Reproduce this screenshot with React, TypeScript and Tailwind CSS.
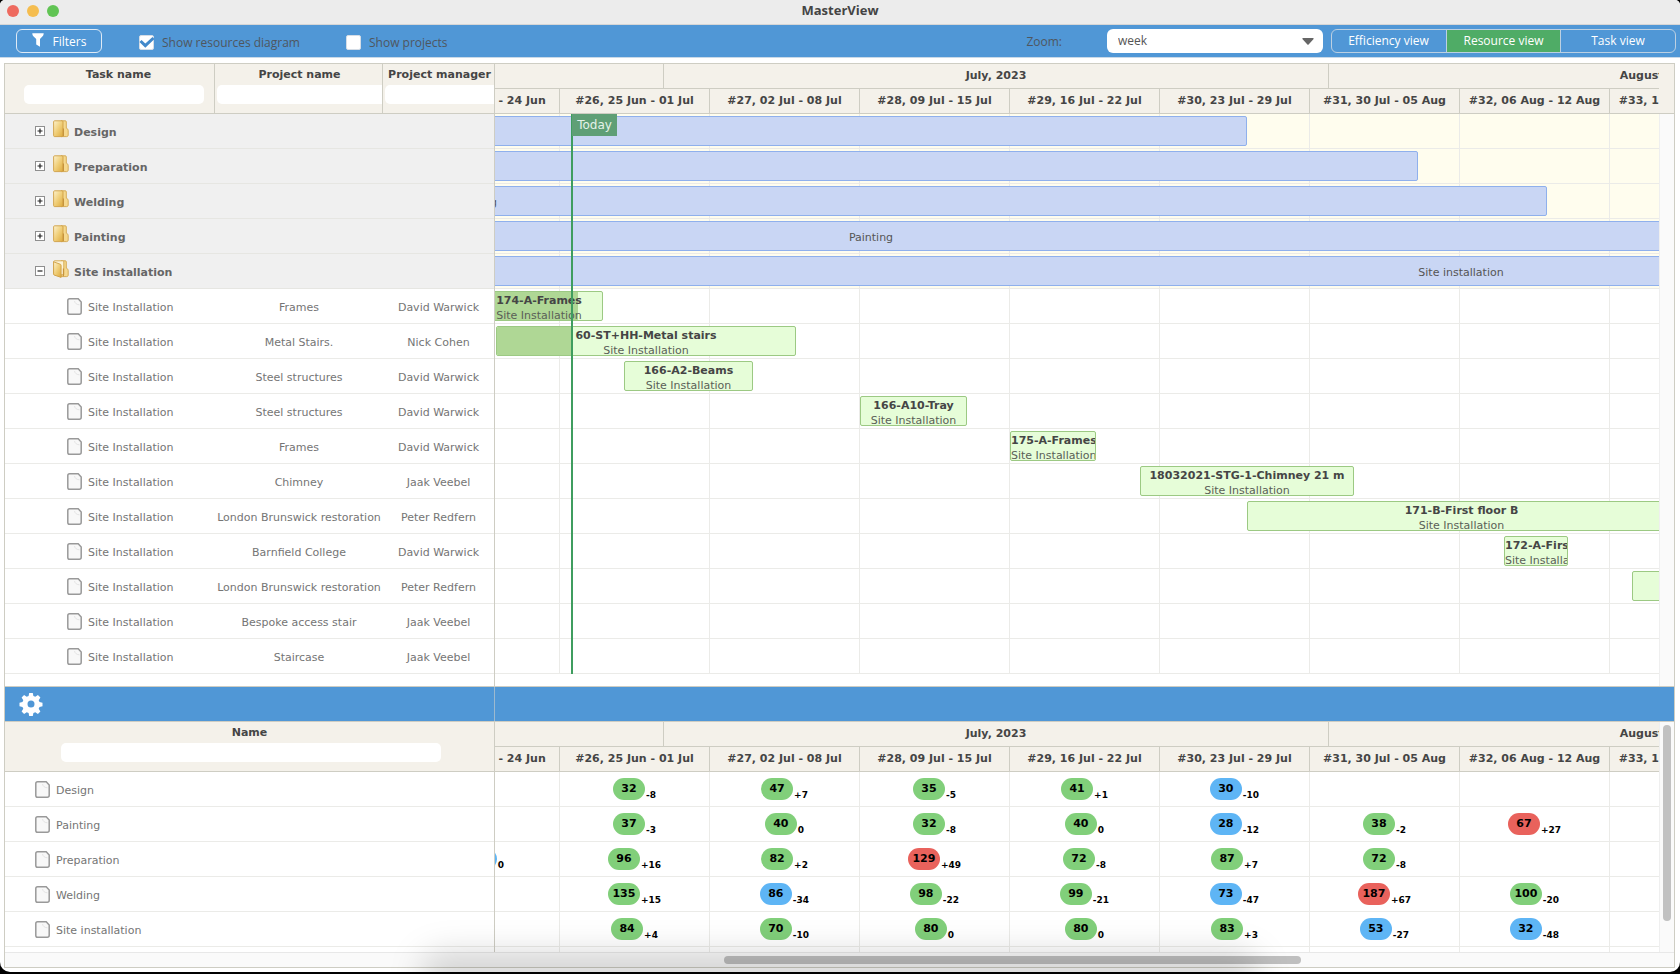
import React from "react";

type Tone = "green" | "blue" | "red";

const tones: Record<Tone, string> = {
  green: "bg-[#81cf7a]",
  blue: "bg-[#5eb5f5]",
  red: "bg-[#e9625c]",
};

const weeks = [
  "#25, 18 Jun - 24 Jun",
  "#26, 25 Jun - 01 Jul",
  "#27, 02 Jul - 08 Jul",
  "#28, 09 Jul - 15 Jul",
  "#29, 16 Jul - 22 Jul",
  "#30, 23 Jul - 29 Jul",
  "#31, 30 Jul - 05 Aug",
  "#32, 06 Aug - 12 Aug",
  "#33, 13 Aug - 19 Aug",
];

type Group = { name: string; open?: boolean; left: number; width: number; label?: string };

const groups: Group[] = [
  { name: "Design", left: -1450, width: 2202 },
  { name: "Preparation", left: -1400, width: 2323 },
  { name: "Welding", left: -1092, width: 2144, label: "Welding" },
  { name: "Painting", left: -425, width: 1602, label: "Painting" },
  { name: "Site installation", open: true, left: -20, width: 1972, label: "Site installation" },
];

type Task = {
  project: string;
  manager: string;
  bar?: { left: number; width: number; title: string; done?: number };
};

const tasks: Task[] = [
  { project: "Frames", manager: "David Warwick", bar: { left: -20, width: 128, title: "174-A-Frames", done: 102 } },
  { project: "Metal Stairs.", manager: "Nick Cohen", bar: { left: 1, width: 300, title: "60-ST+HH-Metal stairs", done: 75 } },
  { project: "Steel structures", manager: "David Warwick", bar: { left: 129, width: 129, title: "166-A2-Beams" } },
  { project: "Steel structures", manager: "David Warwick", bar: { left: 365, width: 107, title: "166-A10-Tray" } },
  { project: "Frames", manager: "David Warwick", bar: { left: 515, width: 86, title: "175-A-Frames" } },
  { project: "Chimney", manager: "Jaak Veebel", bar: { left: 645, width: 214, title: "18032021-STG-1-Chimney 21 m" } },
  { project: "London Brunswick restoration", manager: "Peter Redfern", bar: { left: 752, width: 429, title: "171-B-First floor B" } },
  { project: "Barnfield College", manager: "David Warwick", bar: { left: 1009, width: 64, title: "172-A-First floor" } },
  { project: "London Brunswick restoration", manager: "Peter Redfern", bar: { left: 1137, width: 200, title: "" } },
  { project: "Bespoke access stair", manager: "Jaak Veebel" },
  { project: "Staircase", manager: "Jaak Veebel" },
];

type Load = [number, string, Tone] | null;

const resources: { name: string; loads: Load[] }[] = [
  {
    name: "Design",
    loads: [null, [32, "-8", "green"], [47, "+7", "green"], [35, "-5", "green"], [41, "+1", "green"], [30, "-10", "blue"], null, null, null],
  },
  {
    name: "Painting",
    loads: [null, [37, "-3", "green"], [40, "0", "green"], [32, "-8", "green"], [40, "0", "green"], [28, "-12", "blue"], [38, "-2", "green"], [67, "+27", "red"], null],
  },
  {
    name: "Preparation",
    loads: [[80, "0", "blue"], [96, "+16", "green"], [82, "+2", "green"], [129, "+49", "red"], [72, "-8", "green"], [87, "+7", "green"], [72, "-8", "green"], null, null],
  },
  {
    name: "Welding",
    loads: [null, [135, "+15", "green"], [86, "-34", "blue"], [98, "-22", "green"], [99, "-21", "green"], [73, "-47", "blue"], [187, "+67", "red"], [100, "-20", "green"], null],
  },
  {
    name: "Site installation",
    loads: [null, [84, "+4", "green"], [70, "-10", "green"], [80, "0", "green"], [80, "0", "green"], [83, "+3", "green"], [53, "-27", "blue"], [32, "-48", "blue"], null],
  },
];

function FunnelIcon() {
  return (
    <svg width="12" height="14" viewBox="0 0 12 14" fill="#fff" aria-hidden="true">
      <path d="M.3.300h11.400c0 1.400-.5 2.500-1.600 3.500L8 5.900v7.800l-3.800-2.200V5.900L1.900 3.800C.8 2.800.3 1.700.3.300z" />
    </svg>
  );
}

function GearIcon() {
  return (
    <svg width="24" height="24" viewBox="0 0 24 24" fill="#fff" fillRule="evenodd" aria-hidden="true">
      <path d="M10.200 1h3.600l.6 3 1.900.8 2.600-1.700 2.500 2.500-1.700 2.600.8 1.900 3 .6v3.600l-3 .6-.8 1.900 1.700 2.600-2.500 2.500-2.600-1.700-1.900.8-.6 3h-3.600l-.6-3-1.900-.8-2.600 1.700-2.500-2.500 1.700-2.600-.8-1.900-3-.6v-3.600l3-.6.8-1.900-1.700-2.600 2.500-2.500 2.600 1.700 1.900-.8zM12 8.600a3.500 3.500 0 1 0 0 7 3.500 3.500 0 0 0 0-7z" />
    </svg>
  );
}

function ToggleIcon({ open }: { open?: boolean }) {
  return (
    <svg width="10" height="10" viewBox="0 0 10 10" aria-hidden="true">
      <rect x="0.500" y="0.500" width="9" height="9" fill="#fff" stroke="#8f8f8f" />
      <path d={open ? "M2.500 5h5" : "M2.500 5h5M5 2.500v5"} stroke="#222" strokeWidth="1.200" />
    </svg>
  );
}

function FolderIcon({ open }: { open?: boolean }) {
  return (
    <svg width="16" height="18" viewBox="0 0 16 18" aria-hidden="true">
      <defs>
        <linearGradient id="folderFill" x1="0" y1="0" x2="1" y2="1">
          <stop offset="0" stopColor="#fdf3cf" />
          <stop offset="0.500" stopColor="#f0cf7a" />
          <stop offset="1" stopColor="#dda93c" />
        </linearGradient>
      </defs>
      <path
        d="M8 .8h4.300c.6 0 1 .4 1 1v6.400c1.300.4 1.900 1.200 1.900 2.500v4.300c0 1-.6 1.600-1.500 1.600H8z"
        fill="#f5d88e"
        stroke="#d3a54c"
        strokeWidth="0.900"
      />
      {open ? (
        <>
          <path d="M1.600.8h8.200c.6 0 1 .4 1 1v13H1.600c-.6 0-1-.4-1-1v-12c0-.6.4-1 1-1z" fill="#fdf4d8" stroke="#d3a54c" strokeWidth="0.900" />
          <path
            d="M.6 1.800l6.600 2.400c.6.200.9.600.9 1.200v12L1.600 15.200c-.7-.3-1-.7-1-1.300z"
            fill="url(#folderFill)"
            stroke="#cf9f45"
            strokeWidth="0.900"
          />
        </>
      ) : (
        <path
          d="M1.600.8h7.400c.6 0 1 .4 1 1v13.800c0 .6-.4 1-1 1H1.600c-.6 0-1-.4-1-1V1.800c0-.6.4-1 1-1z"
          fill="url(#folderFill)"
          stroke="#cf9f45"
          strokeWidth="0.900"
        />
      )}
      <path d="M10.400 8.500v7.800" stroke="#c4913a" strokeWidth="1.100" />
    </svg>
  );
}

function DocIcon() {
  return (
    <svg width="15" height="17" viewBox="0 0 15 17" aria-hidden="true">
      <path
        d="M2.600.8h8.600L14.200 4v10.200c0 1.200-.7 2-1.900 2H2.600c-1.200 0-1.800-.7-1.800-1.800V2.600C.8 1.400 1.500.8 2.600.8z"
        fill="#f8f8f8"
        stroke="#999"
        strokeWidth="1.500"
      />
      <path d="M7.500 3c.4 2.200 2.200 3.800 5 3.800" fill="none" stroke="#e4e4e4" />
    </svg>
  );
}

function TitleBar() {
  return (
    <header className="flex h-[25px] items-center border-b border-[#d6d6d6] bg-[#ececec] px-[7px]">
      <div className="flex flex-1 gap-2 pb-[2px]">
        <span className="size-3 rounded-full bg-[#ee6a5f]" />
        <span className="size-3 rounded-full bg-[#f5bd4f]" />
        <span className="size-3 rounded-full bg-[#61c454]" />
      </div>
      <h1 className="pb-1 text-[13px] font-bold leading-4 text-[#444]">MasterView</h1>
      <div className="flex-1" />
    </header>
  );
}

function Check({ label, checked, id }: { label: string; checked?: boolean; id: string }) {
  return (
    <label htmlFor={id} className="flex items-center gap-2 pt-[2px] text-[#4f565e]">
      <span className="relative size-[15px]">
        <input
          id={id}
          type="checkbox"
          defaultChecked={checked}
          className="peer block size-[15px] appearance-none rounded-[2px] border border-[#d5dde6] bg-white"
        />
        <svg
          viewBox="0 0 15 15"
          className="pointer-events-none absolute inset-0 hidden size-[15px] peer-checked:block"
          aria-hidden="true"
        >
          <path d="M1.500 6l4.800 4.600L14.500 3" fill="none" stroke="#4289cb" strokeWidth="3" />
        </svg>
      </span>
      <span className="pt-[2px]">{label}</span>
    </label>
  );
}

function Toolbar() {
  return (
    <div className="flex h-[33px] items-center border-b border-[#c9d9e8] bg-[#5097d6] pl-4 pr-1 text-[12px] leading-4">
      <button className="flex h-6 w-[86px] items-center justify-center gap-[9px] rounded-md border border-[#dfeaf5] text-white">
        <span className="pb-[2px]">
          <FunnelIcon />
        </span>
        <span className="pt-px">Filters</span>
      </button>
      <div className="ml-[37px]">
        <Check id="show-resources" label="Show resources diagram" checked />
      </div>
      <div className="ml-[46px]">
        <Check id="show-projects" label="Show projects" />
      </div>
      <label htmlFor="zoom" className="ml-auto pt-px text-[#4f565e]">
        Zoom:
      </label>
      <div className="relative ml-[45px] w-[216px]">
        <select
          id="zoom"
          defaultValue="week"
          className="block h-6 w-full appearance-none rounded-md bg-white pl-[11px] text-[#555]"
        >
          <option>day</option>
          <option>week</option>
          <option>month</option>
        </select>
        <svg className="pointer-events-none absolute right-[9px] top-[9px]" width="12" height="7" viewBox="0 0 12 7" aria-hidden="true">
          <path d="M1.200 0h9.600c.8 0 1.100.7.600 1.200L6.600 6.500c-.3.400-.9.400-1.200 0L.6 1.200C.1.700.4 0 1.200 0z" fill="#666" />
        </svg>
      </div>
      <div className="ml-2 flex h-6 overflow-hidden rounded-md border border-[#bcd0e2] text-white">
        <button className="w-[114px] pr-px">Efficiency view</button>
        <button className="w-[115px] border-x border-[#bcd0e2] bg-[#4fac66]">Resource view</button>
        <button className="w-[114px]">Task view</button>
      </div>
    </div>
  );
}

const dark = "border-[#cecdc3]";

function ScaleHeader() {
  return (
    <div className={`overflow-hidden border-b bg-[#f4f1ea] font-bold text-[#454545] ${dark}`}>
      <div className={`flex h-[25px] border-b leading-6 ${dark}`}>
        <div className={`w-[169px] shrink-0 border-r ${dark}`} />
        <div className={`w-[665px] shrink-0 border-r text-center ${dark}`}>July, 2023</div>
        <div className="w-[664px] shrink-0 text-center">August, 2023</div>
      </div>
      <div className="-ml-[85px] flex h-6 leading-6">
        {weeks.map((w) => (
          <div key={w} className={`w-[150px] shrink-0 border-r text-center ${dark}`}>
            {w}
          </div>
        ))}
      </div>
    </div>
  );
}

function WeekCells({ tint }: { tint?: boolean }) {
  return (
    <div className={tint ? "-ml-[85px] flex h-full bg-[#fffdee]" : "-ml-[85px] flex h-full"}>
      {weeks.map((w) => (
        <div key={w} className="w-[150px] shrink-0 border-r border-[#ebebe8]" />
      ))}
    </div>
  );
}

function TaskGrid() {
  return (
    <div className={`w-[490px] shrink-0 border-r ${dark}`}>
      <table className="w-full table-fixed border-separate border-spacing-0">
        <colgroup>
          <col className="w-[210px]" />
          <col className="w-[168px]" />
          <col />
        </colgroup>
        <thead>
          <tr className="h-[50px] bg-[#f4f1ea] align-top text-[#454545]">
            <th className={`border-b border-r p-0 pl-[18px] ${dark}`}>
              <label htmlFor="f-task" className="block pt-px leading-5">Task name</label>
              <input id="f-task" className="ml-px block h-[19px] w-[180px] rounded-[5px] bg-white px-1" />
            </th>
            <th className={`border-b border-r p-0 pl-[2px] ${dark}`}>
              <label htmlFor="f-project" className="block pt-px leading-5">Project name</label>
              <input id="f-project" className="block h-[19px] w-full rounded-l-[5px] bg-white px-1" />
            </th>
            <th className={`border-b p-0 pl-[2px] ${dark}`}>
              <label htmlFor="f-manager" className="block pt-px leading-5">Project manager</label>
              <input id="f-manager" className="block h-[19px] w-full rounded-l-[5px] bg-white px-1" />
            </th>
          </tr>
        </thead>
        <tbody className="text-[#757575]">
          {groups.map((g) => (
            <tr key={g.name} className="h-[35px] bg-[#f0f0f0] font-bold text-[#666]">
              <td colSpan={3} className="border-b border-[#e6e6e2] p-0">
                <div className="flex items-center pl-[30px]">
                  <button aria-label={`Toggle ${g.name}`}>
                    <ToggleIcon open={g.open} />
                  </button>
                  <span className="-mt-1 ml-2">
                    <FolderIcon open={g.open} />
                  </span>
                  <span className="ml-[5px] pt-[3px]">{g.name}</span>
                </div>
              </td>
            </tr>
          ))}
          {tasks.map((t, i) => (
            <tr key={i} className="h-[35px] text-center">
              <td className="border-b border-[#ebebe8] p-0">
                <div className="flex items-center gap-[6px] pl-[62px]">
                  <DocIcon />
                  <span className="pt-[3px]">Site Installation</span>
                </div>
              </td>
              <td className="whitespace-nowrap border-b border-[#ebebe8] p-0 pt-[3px]">{t.project}</td>
              <td className="whitespace-nowrap border-b border-[#ebebe8] p-0 pt-[3px]">{t.manager}</td>
            </tr>
          ))}
        </tbody>
      </table>
    </div>
  );
}

function GroupBar({ group }: { group: Group }) {
  return (
    <div
      className="absolute top-[2px] h-[30px] rounded-[2px] border border-[#8fb0ec] bg-[#c9d6f4] text-center leading-8 text-[#555]"
      style={{ left: group.left, width: group.width }}
    >
      {group.label}
    </div>
  );
}

function TaskBar({ bar }: { bar: NonNullable<Task["bar"]> }) {
  return (
    <div
      className="absolute top-[2px] h-[30px] overflow-hidden rounded-[2px] border border-[#9cc983] bg-[#e6fdd8] leading-[15px]"
      style={{ left: bar.left, width: bar.width }}
    >
      {bar.done ? <div className="absolute inset-y-0 left-0 bg-[#afd795]" style={{ width: bar.done }} /> : null}
      {bar.title ? (
        <div className="relative flex flex-col whitespace-nowrap pt-px text-[#454545]">
          <div className="flex justify-center-safe font-bold">{bar.title}</div>
          <div className="flex justify-center-safe text-[#5a5f57]">Site Installation</div>
        </div>
      ) : null}
    </div>
  );
}

function Timeline() {
  return (
    <div className="flex min-w-0 flex-1">
      <div className="flex min-w-0 flex-1 flex-col">
        <ScaleHeader />
        <div className="relative overflow-hidden">
          {groups.map((g) => (
            <div key={g.name} className="relative h-[35px] border-b border-[#ebebe8]">
              <WeekCells tint />
              <GroupBar group={g} />
            </div>
          ))}
          {tasks.map((t, i) => (
            <div key={i} className="relative h-[35px] border-b border-[#ebebe8]">
              <WeekCells />
              {t.bar ? <TaskBar bar={t.bar} /> : null}
            </div>
          ))}
          <div className="absolute inset-y-0 left-[76px] w-[2px] bg-[#3f9d5f]" />
          <div className="absolute left-[77px] top-0 h-[22px] w-[45px] bg-[#5f9f76] text-center text-[12px] leading-[22px] text-[#e4f2e8]">
            Today
          </div>
        </div>
        <div className="h-3" />
      </div>
      <div className="flex w-[15px] shrink-0 flex-col">
        <div className={`h-[50px] border-b bg-[#f4f1ea] ${dark}`} />
        <div className="flex-1 border-l border-[#efefef] bg-[#fafafa]" />
      </div>
    </div>
  );
}

function ResourceGrid() {
  return (
    <div className={`w-[490px] shrink-0 border-r ${dark}`}>
      <table className="w-full border-separate border-spacing-0">
        <thead>
          <tr className="h-[50px] bg-[#f4f1ea] align-top text-[#454545]">
            <th className={`border-b p-0 ${dark}`}>
              <label htmlFor="f-name" className="block pt-px leading-5">Name</label>
              <input id="f-name" className="ml-14 block h-[19px] w-[380px] rounded-[5px] bg-white px-1" />
            </th>
          </tr>
        </thead>
        <tbody className="text-[#757575]">
          {resources.map((r) => (
            <tr key={r.name} className="h-[35px]">
              <td className="border-b border-[#ebebe8] p-0">
                <div className="flex items-center gap-[6px] pl-[30px]">
                  <DocIcon />
                  <span className="pt-[3px]">{r.name}</span>
                </div>
              </td>
            </tr>
          ))}
        </tbody>
      </table>
    </div>
  );
}

function ResourceLoads() {
  return (
    <div className="flex min-w-0 flex-1">
      <div className="flex min-w-0 flex-1 flex-col overflow-hidden">
        <ScaleHeader />
        <table className="-ml-[85px] w-[1350px] table-fixed border-separate border-spacing-0">
          <tbody>
            {resources.map((r) => (
              <tr key={r.name} className="h-[35px]">
                {r.loads.map((l, i) => (
                  <td key={i} className="border-b border-r border-[#ebebe8] p-0">
                    {l ? (
                      <div className="flex items-center justify-center gap-px font-bold text-black">
                        <span className={`h-[22px] w-8 rounded-[11px] text-center leading-[22px] ${tones[l[2]]}`}>{l[0]}</span>
                        <span className="mt-3 text-[9px] leading-3">{l[1]}</span>
                      </div>
                    ) : null}
                  </td>
                ))}
              </tr>
            ))}
          </tbody>
        </table>
        <div className="h-[5px]">
          <WeekCells />
        </div>
      </div>
      <div className="w-[15px] shrink-0 border-l border-[#efefef] bg-[#fafafa] pl-[3px] pt-[3px]">
        <div className="h-[196px] w-2 rounded-full bg-[#c1c1c1]" />
      </div>
    </div>
  );
}

export default function App() {
  return (
    <div className="min-h-screen bg-black pb-[2px] font-['Open_Sans',sans-serif]">
      <div className="relative overflow-hidden rounded-b-[10px] rounded-t-[5px] bg-white pb-1">
        <TitleBar />
        <Toolbar />
        <main className={`ml-1 mr-[5px] mt-[5px] border font-['DejaVu_Sans',Verdana,sans-serif] text-[11px] leading-[15px] ${dark}`}>
          <section className="flex">
            <TaskGrid />
            <Timeline />
          </section>
          <section>
            <div className={`flex h-9 border-y bg-[#5097d6] ${dark}`}>
              <div className="flex w-[490px] items-center border-r border-[#9db9cf] pl-[14px]">
                <button aria-label="Resource settings">
                  <GearIcon />
                </button>
              </div>
            </div>
            <div className="flex">
              <ResourceGrid />
              <ResourceLoads />
            </div>
          </section>
          <div className="h-[15px] border-t border-[#e8e8e8] bg-[#fafafa] pl-[2px] pt-[3px]">
            <div className="ml-[43%] h-2 w-[577px] rounded-full bg-[#bfbfbf]" />
          </div>
        </main>
        <div className="pointer-events-none absolute -bottom-7 left-1/4 right-1/4 h-12 rounded-full bg-black/15 blur-[16px]" />
      </div>
    </div>
  );
}
